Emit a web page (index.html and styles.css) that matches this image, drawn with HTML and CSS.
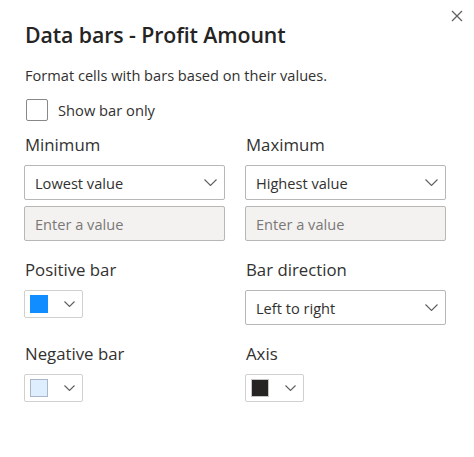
FILE: index.html
```html
<!DOCTYPE html>
<html>
<head>
<meta charset="utf-8">
<link rel="stylesheet" href="styles.css">
</head>
<body>
<div class="dialog">
  <button class="close" aria-label="Close">
    <svg width="12" height="12" viewBox="0 0 12 12"><path d="M1 1L11 11M11 1L1 11" stroke="#605e5c" stroke-width="1.2" fill="none"/></svg>
  </button>
  <h1 class="title">Data bars - Profit Amount</h1>
  <p class="desc">Format cells with bars based on their values.</p>
  <label class="check"><span class="box"></span><span>Show bar only</span></label>

  <div class="grid">
    <div class="col">
      <div class="label">Minimum</div>
      <div class="select"><span>Lowest value</span><svg class="chev" width="13" height="7" viewBox="0 0 13 7"><path d="M0.5 0.5L6.5 6.5L12.5 0.5" stroke="#605e5c" stroke-width="1.1" fill="none"/></svg></div>
      <div class="input">Enter a value</div>
    </div>
    <div class="col">
      <div class="label">Maximum</div>
      <div class="select"><span>Highest value</span><svg class="chev" width="13" height="7" viewBox="0 0 13 7"><path d="M0.5 0.5L6.5 6.5L12.5 0.5" stroke="#605e5c" stroke-width="1.1" fill="none"/></svg></div>
      <div class="input">Enter a value</div>
    </div>

    <div class="col sec">
      <div class="label">Positive bar</div>
      <div class="swatch"><span class="chip blue"></span><svg class="chev-s" width="11" height="6" viewBox="0 0 11 6"><path d="M0.5 0.5L5.5 5.5L10.5 0.5" stroke="#605e5c" stroke-width="1.1" fill="none"/></svg></div>
    </div>
    <div class="col sec">
      <div class="label">Bar direction</div>
      <div class="select"><span>Left to right</span><svg class="chev" width="13" height="7" viewBox="0 0 13 7"><path d="M0.5 0.5L6.5 6.5L12.5 0.5" stroke="#605e5c" stroke-width="1.1" fill="none"/></svg></div>
    </div>

    <div class="col sec">
      <div class="label">Negative bar</div>
      <div class="swatch"><span class="chip light"></span><svg class="chev-s" width="11" height="6" viewBox="0 0 11 6"><path d="M0.5 0.5L5.5 5.5L10.5 0.5" stroke="#605e5c" stroke-width="1.1" fill="none"/></svg></div>
    </div>
    <div class="col sec">
      <div class="label">Axis</div>
      <div class="swatch"><span class="chip dark"></span><svg class="chev-s" width="11" height="6" viewBox="0 0 11 6"><path d="M0.5 0.5L5.5 5.5L10.5 0.5" stroke="#605e5c" stroke-width="1.1" fill="none"/></svg></div>
    </div>
  </div>
</div>
</body>
</html>
```

FILE: styles.css
```css
* { box-sizing: border-box; }
html, body { margin: 0; padding: 0; background: #fff; }
body {
  font-family: "Open Sans", "Noto Sans", sans-serif;
  color: #252423;
  width: 474px;
  height: 457px;
  overflow: hidden;
}
.dialog {
  position: relative;
  padding: 21px 28px 0 24px;
}
.close {
  position: absolute;
  top: 10px;
  right: 11px;
  width: 12px;
  height: 12px;
  padding: 0;
  border: 0;
  background: none;
  display: flex;
}
.title {
  margin: 0 0 0 1px;
  font-size: 21.3px;
  font-weight: 600;
  line-height: 28px;
  color: #252423;
  letter-spacing: -0.1px;
}
.desc {
  margin: 16px 0 0 1px;
  font-size: 14.6px;
  line-height: 20px;
  color: #323130;
}
.check {
  display: flex;
  align-items: center;
  gap: 10px;
  margin-top: 14px;
  margin-left: 2px;
  font-size: 14.7px;
  line-height: 22px;
  color: #323130;
}
.box {
  width: 22px;
  height: 22px;
  border: 1px solid #8a8886;
  border-radius: 2px;
  background: #fff;
}
.grid {
  display: grid;
  grid-template-columns: 201px 201px;
  column-gap: 20px;
  margin-top: 12px;
}
.col { display: flex; flex-direction: column; }
.sec { margin-top: 17px; }
.label {
  font-size: 16.8px;
  line-height: 24px;
  color: #323130;
  margin-left: 1px;
  margin-bottom: 8px;
}
.select, .input {
  height: 35px;
  border: 1px solid #b9b7b5;
  border-radius: 2px;
  display: flex;
  align-items: center;
  justify-content: space-between;
  padding: 0 7px 0 10px;
  font-size: 14.6px;
  color: #323130;
}
.select { background: #fff; }
.input {
  margin-top: 6px;
  background: #f3f2f1;
  color: #7a7876;
}
.swatch {
  width: 59px;
  height: 28px;
  border: 1px solid #d2d0ce;
  border-radius: 2px;
  display: flex;
  align-items: center;
  padding-left: 5px;
  gap: 16px;
  background: #fff;
}
.chip {
  width: 18px;
  height: 18px;
  display: block;
}
.blue { background: #118dff; }
.light { background: #deeefe; border: 1px solid #a8b8c8; }
.dark { background: #252423; border: 1px solid #c8c6c4; }
```
